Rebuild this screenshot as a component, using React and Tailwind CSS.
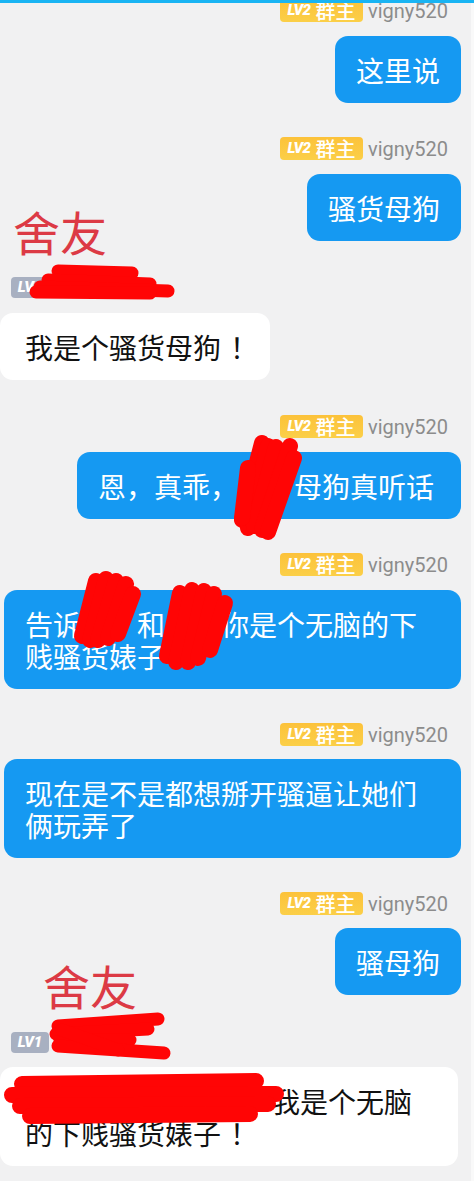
import React from 'react';

const CJK = "font-['Noto_Sans_CJK_SC','Noto_Sans',sans-serif]";

const OwnerHeader = ({ className = '' }) => (
  <div className={`flex items-center justify-end pr-[13px] h-[23px] ${className}`}>
    <div className="flex items-center justify-center gap-[5px] w-[83px] h-[23px] rounded-[4px] bg-gradient-to-b from-[#fcc23a] to-[#fbcf48] text-white">
      <span className="font-['Roboto',sans-serif] italic font-black text-[15px] leading-none tracking-[-0.5px]">LV2</span>
      <span className={`${CJK} text-[20px] leading-none font-medium`}>群主</span>
    </div>
    <span className="ml-[5px] font-['Roboto',sans-serif] text-[20px] leading-none text-[#8c8c8c]">vigny520</span>
  </div>
);

const MemberHeader = ({ className = '' }) => (
  <div className={`flex items-center pl-[11px] h-[21px] ${className}`}>
    <div className="flex items-center justify-center w-[38px] h-[21px] rounded-[4px] bg-[#a8b0c1] text-white">
      <span className="font-['Roboto',sans-serif] italic font-black text-[15px] leading-none">LV1</span>
    </div>
  </div>
);

const Blue = ({ children, className = '' }) => (
  <div className={`rounded-[13px] bg-[#1599f2] text-white px-[21px] py-[17.5px] text-[28px] leading-[32px] whitespace-nowrap ${CJK} ${className}`}>
    {children}
  </div>
);

const White = ({ children, className = '' }) => (
  <div className={`rounded-[13px] bg-white text-[#111] pl-[25px] pr-[21px] py-[17.5px] text-[28px] leading-[32px] whitespace-nowrap ${CJK} ${className}`}>
    {children}
  </div>
);

const Gap = ({ w }) => <span className={`inline-block ${w}`} />;
const Bang = () => <span className="relative left-[9px]">！</span>;

export default function App() {
  return (
    <div className="relative w-[474px] h-[1181px] overflow-hidden bg-[#f1f1f2]">
      <div className="relative z-10 h-[3px] bg-[#19b4f3]" />
      <div className="absolute right-0 top-0 bottom-0 w-[3px] bg-[#f9f9f9]" />

      <div className="flex flex-col pr-[13px]">
        <OwnerHeader className="-mt-[4px]" />
        <div className="mt-[14px] flex justify-end">
          <Blue>这里说</Blue>
        </div>

        <OwnerHeader className="mt-[34px]" />
        <div className="mt-[14px] flex justify-end">
          <Blue>骚货母狗</Blue>
        </div>

        <MemberHeader className="mt-[36px]" />
        <div className="mt-[15px] flex">
          <White className="w-[270px]">我是个骚货母狗<Bang /></White>
        </div>

        <OwnerHeader className="mt-[35px]" />
        <div className="mt-[14px] flex justify-end">
          <Blue className="w-[384px] px-[20px]">
            恩，真乖，<Gap w="w-[56px]" />母狗真听话
          </Blue>
        </div>

        <OwnerHeader className="mt-[34px]" />
        <div className="mt-[14px] flex justify-end">
          <Blue className="w-[457px]">
            <div>
              告诉<Gap w="w-[56px]" />和<Gap w="w-[56px]" />你是个无脑的下
            </div>
            <div>贱骚货婊子</div>
          </Blue>
        </div>

        <OwnerHeader className="mt-[34px]" />
        <div className="mt-[13px] flex justify-end">
          <Blue className="w-[457px]">
            <div>现在是不是都想掰开骚逼让她们</div>
            <div>俩玩弄了</div>
          </Blue>
        </div>

        <OwnerHeader className="mt-[34px]" />
        <div className="mt-[13px] flex justify-end">
          <Blue>骚母狗</Blue>
        </div>

        <MemberHeader className="mt-[37px]" />
        <div className="mt-[14px] flex">
          <White className="w-[458px]">
            <div>
              <Gap w="w-[247px]" />我是个无脑
            </div>
            <div>的下贱骚货婊子<Bang /></div>
          </White>
        </div>
      </div>

      {/* annotations drawn over the screenshot */}
      <div className={`absolute left-[13px] top-[207px] text-[47px] leading-none text-[#dc3a45] ${CJK}`}>舍友</div>
      <div className={`absolute left-[43px] top-[961px] text-[47px] leading-none text-[#dc3a45] ${CJK}`}>舍友</div>

      <svg className="absolute inset-0 pointer-events-none" width="474" height="1181" viewBox="0 0 474 1181">
        <g stroke="#ff0505" strokeLinecap="round" strokeLinejoin="round" fill="none">
          {/* name 1 */}
          <g strokeWidth="13">
            <path d="M58 271 L132 273" />
            <path d="M48 280 L150 284" />
            <path d="M40 287 L168 291" />
            <path d="M36 292 L150 293" />
          </g>
          {/* bubble 3 */}
          <g strokeWidth="16">
            <path d="M262 443 L242 520" />
            <path d="M268 446 L248 528" />
            <path d="M276 447 L254 526" />
            <path d="M290 446 L262 530" />
            <path d="M294 458 L268 532" />
            <path d="M248 468 L242 518" />
          </g>
          {/* bubble 4 */}
          <g strokeWidth="16">
            <path d="M96 581 L82 636" />
            <path d="M106 579 L90 640" />
            <path d="M116 581 L98 640" />
            <path d="M126 584 L108 638" />
            <path d="M133 594 L118 634" />
            <path d="M180 593 L167 656" />
            <path d="M192 590 L176 662" />
            <path d="M204 591 L188 662" />
            <path d="M214 594 L198 658" />
            <path d="M225 603 L210 650" />
          </g>
          {/* name 2 */}
          <g strokeWidth="13">
            <path d="M58 1026 L158 1019" />
            <path d="M56 1034 L148 1029" />
            <path d="M60 1040 L130 1040" />
            <path d="M58 1046 L164 1053" />
            <path d="M62 1030 L118 1050" />
          </g>
          {/* white bubble 2 */}
          <g strokeWidth="16">
            <path d="M22 1084 L256 1081" />
            <path d="M12 1095 L276 1094" />
            <path d="M20 1106 L268 1104" />
            <path d="M30 1116 L250 1114" />
          </g>
        </g>
      </svg>
    </div>
  );
}
